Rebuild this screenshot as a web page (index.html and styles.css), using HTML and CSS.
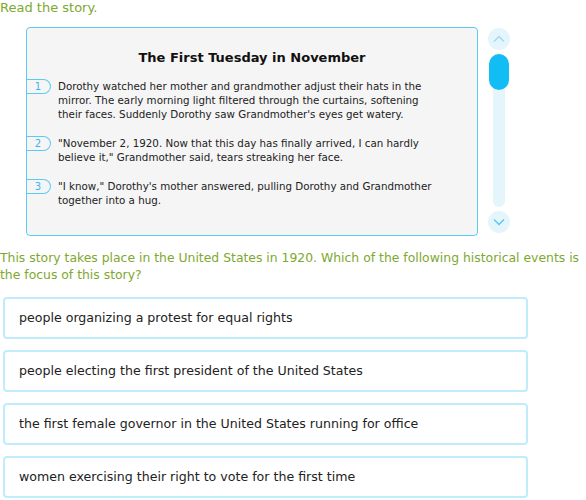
FILE: index.html
```html
<!DOCTYPE html>
<html>
<head>
<meta charset="utf-8">
<link rel="stylesheet" href="styles.css">
</head>
<body>
<div class="prompt">Read the story.</div>
<div class="reader">
  <div class="story">
    <h1 class="title">The First Tuesday in November</h1>
    <div class="para">
      <span class="num">1</span>
      <p class="text">Dorothy watched her mother and grandmother adjust their hats in the mirror. The early morning light filtered through the curtains, softening their faces. Suddenly Dorothy saw Grandmother's eyes get watery.</p>
    </div>
    <div class="para">
      <span class="num">2</span>
      <p class="text">"November 2, 1920. Now that this day has finally arrived, I can hardly believe it," Grandmother said, tears streaking her face.</p>
    </div>
    <div class="para">
      <span class="num">3</span>
      <p class="text">"I know," Dorothy's mother answered, pulling Dorothy and Grandmother together into a hug.</p>
    </div>
  </div>
  <div class="scroll">
    <div class="btn">
      <svg width="12" height="8" viewBox="0 0 12 8"><path d="M1 6.5 L6 1.5 L11 6.5" fill="none" stroke="#9fd8f2" stroke-width="1.4"/></svg>
    </div>
    <div class="track"><div class="thumb"></div></div>
    <div class="btn">
      <svg width="12" height="8" viewBox="0 0 12 8"><path d="M1 1.5 L6 6.5 L11 1.5" fill="none" stroke="#5cc6f2" stroke-width="1.4"/></svg>
    </div>
  </div>
</div>
<div class="question">This story takes place in the United States in 1920. Which of the following historical events is the focus of this story?</div>
<div class="answers">
  <div class="answer">people organizing a protest for equal rights</div>
  <div class="answer">people electing the first president of the United States</div>
  <div class="answer">the first female governor in the United States running for office</div>
  <div class="answer">women exercising their right to vote for the first time</div>
</div>
</body>
</html>
```
FILE: styles.css
```css
html, body {
  margin: 0;
  padding: 0;
  background: #fff;
}
body {
  font-family: "DejaVu Sans", Verdana, sans-serif;
  color: #222;
  width: 586px;
}
.prompt {
  color: #7ea82f;
  font-size: 13px;
  line-height: 16px;
}
.reader {
  display: flex;
  margin: 11px 0 0 26px;
  gap: 10px;
}
.story {
  box-sizing: border-box;
  width: 452px;
  height: 209px;
  background: #f5f5f5;
  border: 1px solid #5ccbf3;
  border-radius: 4px;
  padding: 21px 0 0 0;
}
.title {
  margin: 0 0 13px;
  font-size: 13px;
  line-height: 17px;
  font-weight: bold;
  text-align: center;
  color: #111;
}
.para {
  display: flex;
  align-items: flex-start;
  margin-bottom: 15px;
  margin-left: -1px;
}
.num {
  box-sizing: border-box;
  flex: none;
  width: 25px;
  height: 15px;
  border: 1px solid #5ccbf3;
  border-left: none;
  border-radius: 0 8px 8px 0;
  color: #39b6ee;
  font-size: 10px;
  line-height: 13px;
  text-align: center;
}
.text {
  margin: 0 0 0 7px;
  width: 376px;
  font-size: 10.3px;
  line-height: 14px;
  color: #222;
}
.scroll {
  width: 22px;
  display: flex;
  flex-direction: column;
  align-items: center;
  padding-top: 1px;
}
.btn {
  width: 22px;
  height: 22px;
  border-radius: 50%;
  background: #e5f5fc;
  display: flex;
  align-items: center;
  justify-content: center;
  flex: none;
}
.track {
  width: 12px;
  height: 153px;
  margin: 4px 0;
  background: #e5f5fc;
  border-radius: 6px;
  display: flex;
  justify-content: center;
}
.thumb {
  width: 20px;
  height: 36px;
  flex: none;
  background: #12bdf4;
  border-radius: 10px;
}
.question {
  color: #7ea82f;
  font-size: 12.4px;
  line-height: 17px;
  margin-top: 13px;
}
.answers {
  margin: 14px 0 0 3px;
  display: flex;
  flex-direction: column;
  gap: 11px;
}
.answer {
  box-sizing: border-box;
  width: 525px;
  height: 42px;
  border: 2px solid #c0ecfc;
  border-radius: 4px;
  padding-left: 14px;
  font-size: 12.6px;
  line-height: 38px;
  color: #222;
}
```
